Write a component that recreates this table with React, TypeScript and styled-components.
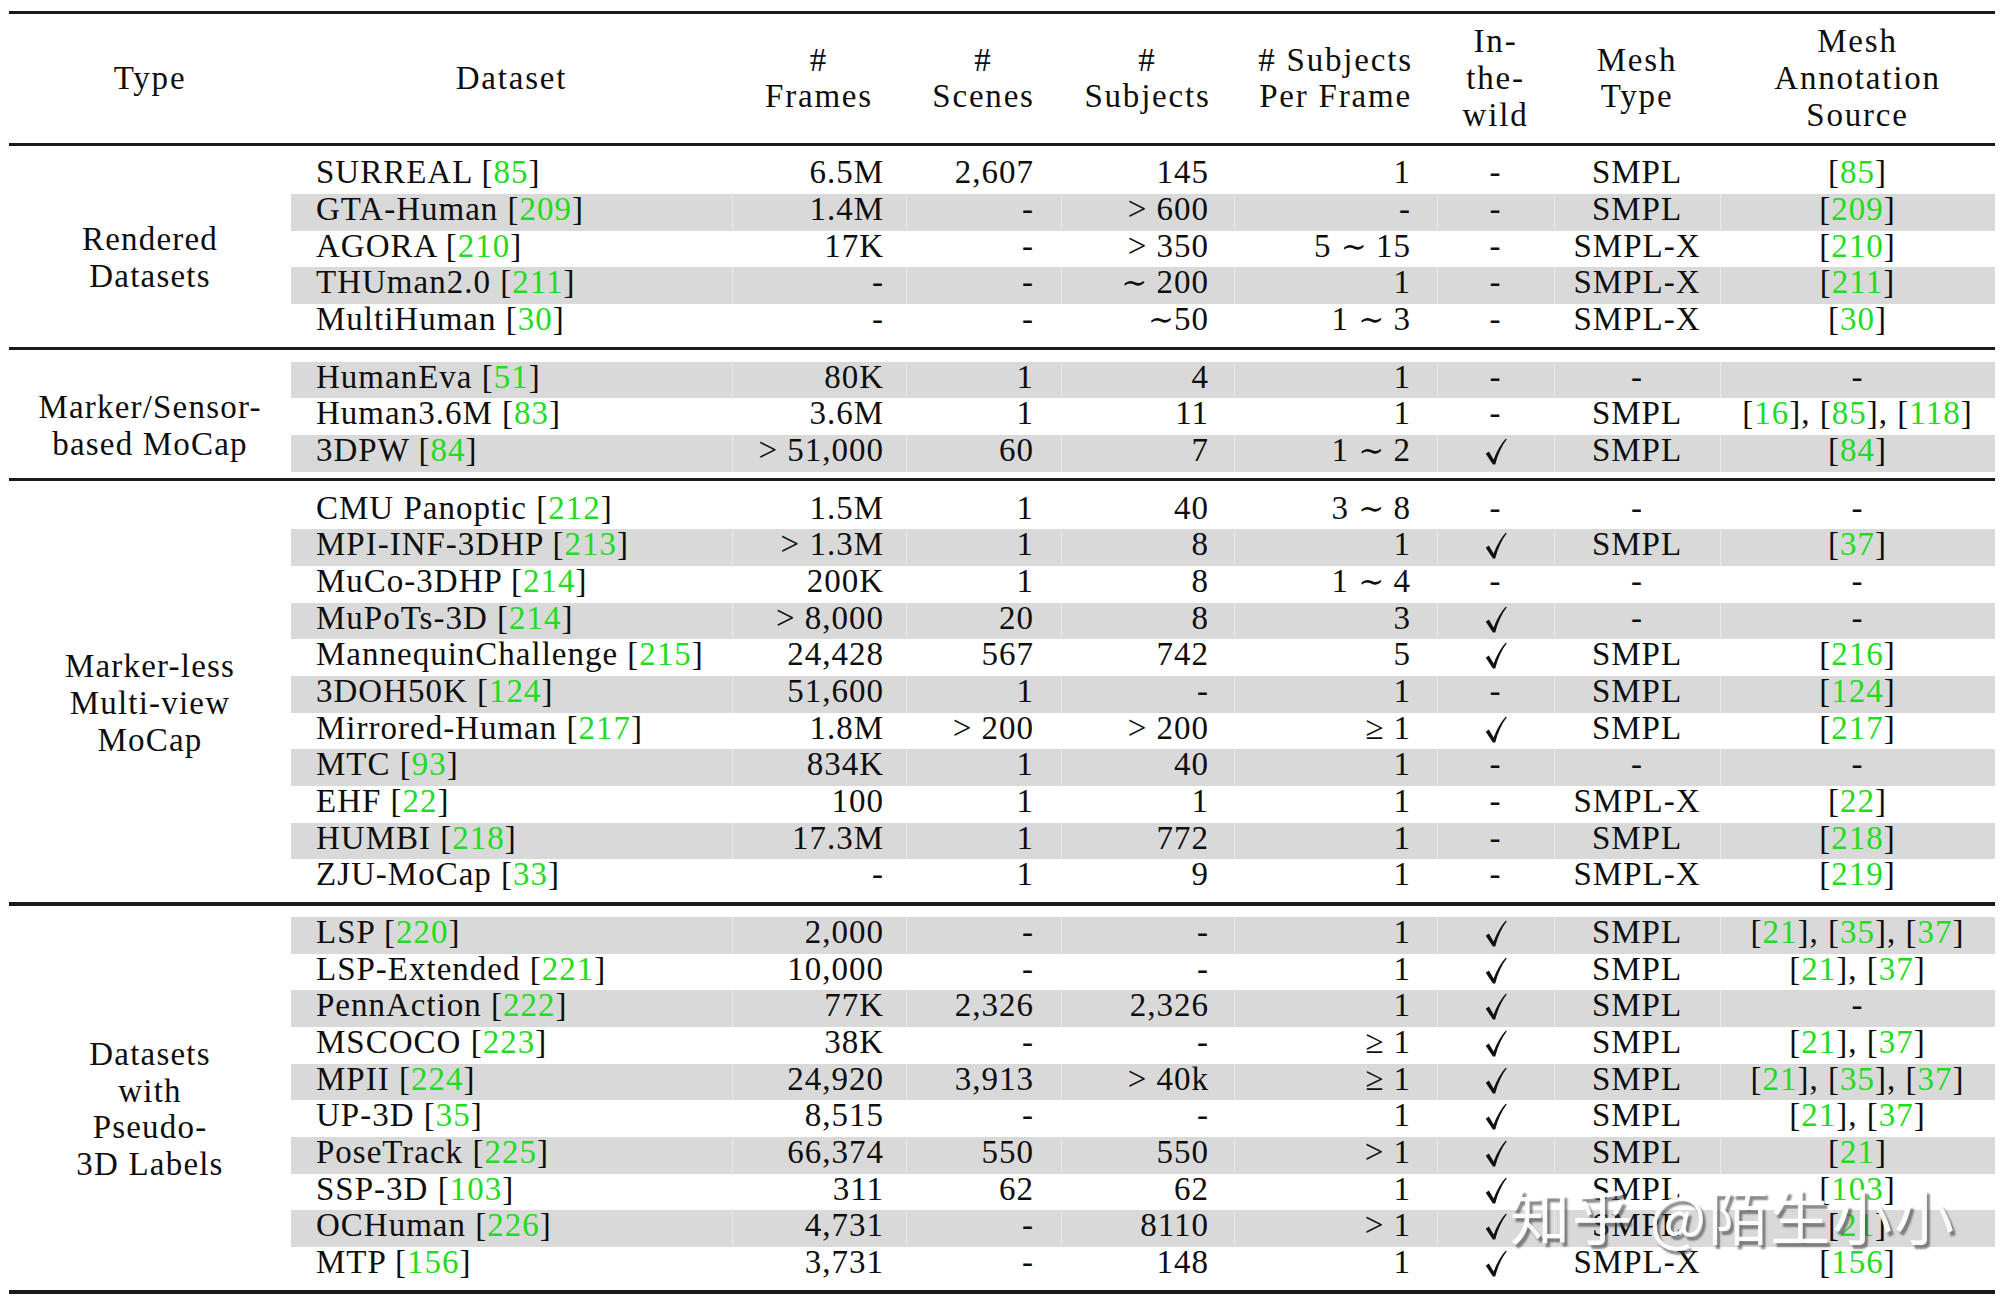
import React from 'react';
import styled, { createGlobalStyle } from 'styled-components';

const GlobalStyle = createGlobalStyle`
  html, body {
    margin: 0;
    padding: 0;
    background: #ffffff;
  }
  body {
    font-family: "Liberation Serif", "DejaVu Serif", serif;
    color: #0e0e0e;
  }
`;

const Page = styled.div`
  position: relative;
  width: 2000px;
  height: 1301px;
  padding: 10.7px 0 0 9px;
  box-sizing: border-box;
  overflow: hidden;
`;

const Table = styled.table`
  border-collapse: collapse;
  border-spacing: 0;
  table-layout: fixed;
  width: 1986px;
  font-size: 33px;
  letter-spacing: 1px;
`;

const Col = styled.col<{ $w: number }>`
  width: ${(p) => p.$w}px;
`;

const RuleCell = styled.td<{ $h: number }>`
  height: ${(p) => p.$h}px;
  padding: 0;
  background: #1b1b1b;
  font-size: 0;
  line-height: 0;
`;

const GapCell = styled.td<{ $h: number }>`
  height: ${(p) => p.$h}px;
  padding: 0;
  font-size: 0;
  line-height: 0;
`;

const HeadCell = styled.th`
  height: 128.7px;
  padding: 0;
  font-weight: normal;
  text-align: center;
  vertical-align: middle;
  line-height: 36.67px;
  letter-spacing: 1.8px;
`;

const TypeCell = styled.td`
  padding: 18px 0 0;
  text-align: center;
  vertical-align: middle;
  line-height: 36.67px;
  letter-spacing: 1.2px;
`;

const DataCell = styled.td<{ $align: string; $pad: number; $shade: boolean; $first: boolean }>`
  height: 36.67px;
  padding: 0 ${(p) => (p.$align === 'right' ? p.$pad : 0)}px 0
    ${(p) => (p.$align === 'left' ? p.$pad : 0)}px;
  text-align: ${(p) => p.$align};
  vertical-align: top;
  line-height: 30px;
  white-space: nowrap;
  background: ${(p) => (p.$shade ? '#d9d9d9' : 'transparent')};
  box-shadow: ${(p) => (p.$shade && !p.$first ? 'inset 1px 0 0 rgba(255,255,255,0.45)' : 'none')};
`;

const Ref = styled.span`
  color: #1fdc1f;
`;

const Sim = styled.span`
  font-family: "DejaVu Serif", serif;
  font-size: 31px;
  letter-spacing: 0;
`;

const CheckMark = styled.svg`
  width: 22px;
  height: 27px;
  vertical-align: -4px;
`;

const Watermark = styled.div`
  position: absolute;
  left: 1510px;
  top: 1178px;
  font-family: "Noto Sans CJK SC", sans-serif;
  font-size: 60px;
  line-height: 72px;
  letter-spacing: 2px;
  color: rgba(255, 255, 255, 0.94);
  text-shadow: 3px 4px 2px rgba(60, 60, 60, 0.6);
  white-space: nowrap;
`;

const Check = () => (
  <CheckMark viewBox="0 0 20 25">
    <path d="M0.5 14.5 L3.4 12.4 L7.8 20 C10.6 12.4 14.6 5.4 19.2 0.5 L19.9 1.4 C15.4 7.2 11.8 14.8 9.3 24.5 L7.1 24.5 Z" fill="#111" />
  </CheckMark>
);

const renderText = (s: string) => {
  if (s === 'v') return <Check />;
  const parts = s.split(/(\[\d+\]|∼)/g);
  return parts.map((p, i) => {
    if (p === '∼') return <Sim key={i}>∼</Sim>;
    const m = p.match(/^\[(\d+)\]$/);
    return m ? (
      <React.Fragment key={i}>
        [<Ref>{m[1]}</Ref>]
      </React.Fragment>
    ) : (
      <React.Fragment key={i}>{p}</React.Fragment>
    );
  });
};

const widths = [282, 441, 174, 155, 173, 203, 117, 166, 275];
const aligns = ['left', 'right', 'right', 'right', 'right', 'center', 'center', 'center'];
const pads = [25, 22, 27, 25, 26, 0, 0, 0];

type Section = { label: string[]; shadeFirst: boolean; rows: string[][] };

const sections: Section[] = [
  {
    label: ['Rendered', 'Datasets'],
    shadeFirst: false,
    rows: [
      ['SURREAL [85]', '6.5M', '2,607', '145', '1', '-', 'SMPL', '[85]'],
      ['GTA-Human [209]', '1.4M', '-', '> 600', '-', '-', 'SMPL', '[209]'],
      ['AGORA [210]', '17K', '-', '> 350', '5 ∼ 15', '-', 'SMPL-X', '[210]'],
      ['THUman2.0 [211]', '-', '-', '∼ 200', '1', '-', 'SMPL-X', '[211]'],
      ['MultiHuman [30]', '-', '-', '∼50', '1 ∼ 3', '-', 'SMPL-X', '[30]'],
    ],
  },
  {
    label: ['Marker/Sensor-', 'based MoCap'],
    shadeFirst: true,
    rows: [
      ['HumanEva [51]', '80K', '1', '4', '1', '-', '-', '-'],
      ['Human3.6M [83]', '3.6M', '1', '11', '1', '-', 'SMPL', '[16], [85], [118]'],
      ['3DPW [84]', '> 51,000', '60', '7', '1 ∼ 2', 'v', 'SMPL', '[84]'],
    ],
  },
  {
    label: ['Marker-less', 'Multi-view', 'MoCap'],
    shadeFirst: false,
    rows: [
      ['CMU Panoptic [212]', '1.5M', '1', '40', '3 ∼ 8', '-', '-', '-'],
      ['MPI-INF-3DHP [213]', '> 1.3M', '1', '8', '1', 'v', 'SMPL', '[37]'],
      ['MuCo-3DHP [214]', '200K', '1', '8', '1 ∼ 4', '-', '-', '-'],
      ['MuPoTs-3D [214]', '> 8,000', '20', '8', '3', 'v', '-', '-'],
      ['MannequinChallenge [215]', '24,428', '567', '742', '5', 'v', 'SMPL', '[216]'],
      ['3DOH50K [124]', '51,600', '1', '-', '1', '-', 'SMPL', '[124]'],
      ['Mirrored-Human [217]', '1.8M', '> 200', '> 200', '≥ 1', 'v', 'SMPL', '[217]'],
      ['MTC [93]', '834K', '1', '40', '1', '-', '-', '-'],
      ['EHF [22]', '100', '1', '1', '1', '-', 'SMPL-X', '[22]'],
      ['HUMBI [218]', '17.3M', '1', '772', '1', '-', 'SMPL', '[218]'],
      ['ZJU-MoCap [33]', '-', '1', '9', '1', '-', 'SMPL-X', '[219]'],
    ],
  },
  {
    label: ['Datasets', 'with', 'Pseudo-', '3D Labels'],
    shadeFirst: true,
    rows: [
      ['LSP [220]', '2,000', '-', '-', '1', 'v', 'SMPL', '[21], [35], [37]'],
      ['LSP-Extended [221]', '10,000', '-', '-', '1', 'v', 'SMPL', '[21], [37]'],
      ['PennAction [222]', '77K', '2,326', '2,326', '1', 'v', 'SMPL', '-'],
      ['MSCOCO [223]', '38K', '-', '-', '≥ 1', 'v', 'SMPL', '[21], [37]'],
      ['MPII [224]', '24,920', '3,913', '> 40k', '≥ 1', 'v', 'SMPL', '[21], [35], [37]'],
      ['UP-3D [35]', '8,515', '-', '-', '1', 'v', 'SMPL', '[21], [37]'],
      ['PoseTrack [225]', '66,374', '550', '550', '> 1', 'v', 'SMPL', '[21]'],
      ['SSP-3D [103]', '311', '62', '62', '1', 'v', 'SMPL', '[103]'],
      ['OCHuman [226]', '4,731', '-', '8110', '> 1', 'v', 'SMPL', '[21]'],
      ['MTP [156]', '3,731', '-', '148', '1', 'v', 'SMPL-X', '[156]'],
    ],
  },
];

const headers: string[][] = [
  ['Type'],
  ['Dataset'],
  ['#', 'Frames'],
  ['#', 'Scenes'],
  ['#', 'Subjects'],
  ['# Subjects', 'Per Frame'],
  ['In-', 'the-', 'wild'],
  ['Mesh', 'Type'],
  ['Mesh', 'Annotation', 'Source'],
];

const lines = (items: string[]) =>
  items.map((t, i) => (
    <React.Fragment key={i}>
      {i > 0 && <br />}
      {t}
    </React.Fragment>
  ));

const Rule = ({ h }: { h: number }) => (
  <tr>
    <RuleCell colSpan={9} $h={h} />
  </tr>
);

const Gap = ({ h }: { h: number }) => (
  <tr>
    <GapCell colSpan={9} $h={h} />
  </tr>
);

const SectionRows = ({ section }: { section: Section }) => (
  <>
    <Gap h={11.5} />
    {section.rows.map((row, r) => {
      const shade = section.shadeFirst ? r % 2 === 0 : r % 2 === 1;
      return (
        <tr key={r}>
          {r === 0 && <TypeCell rowSpan={section.rows.length}>{lines(section.label)}</TypeCell>}
          {row.map((cell, c) => (
            <DataCell key={c} $align={aligns[c]} $pad={pads[c]} $shade={shade} $first={c === 0}>
              {renderText(cell)}
            </DataCell>
          ))}
        </tr>
      );
    })}
    <Gap h={6.3} />
  </>
);

export default function App() {
  return (
    <Page>
      <GlobalStyle />
      <Table>
        <colgroup>
          {widths.map((w, i) => (
            <Col key={i} $w={w} />
          ))}
        </colgroup>
        <thead>
          <Rule h={3.4} />
          <tr>
            {headers.map((h, i) => (
              <HeadCell key={i}>{lines(h)}</HeadCell>
            ))}
          </tr>
          <Rule h={3.1} />
        </thead>
        {sections.map((s, i) => (
          <tbody key={i}>
            <SectionRows section={s} />
            <Rule h={i === sections.length - 1 ? 4 : 3.3} />
          </tbody>
        ))}
      </Table>
      <Watermark>知乎 @陌生小小</Watermark>
    </Page>
  );
}
